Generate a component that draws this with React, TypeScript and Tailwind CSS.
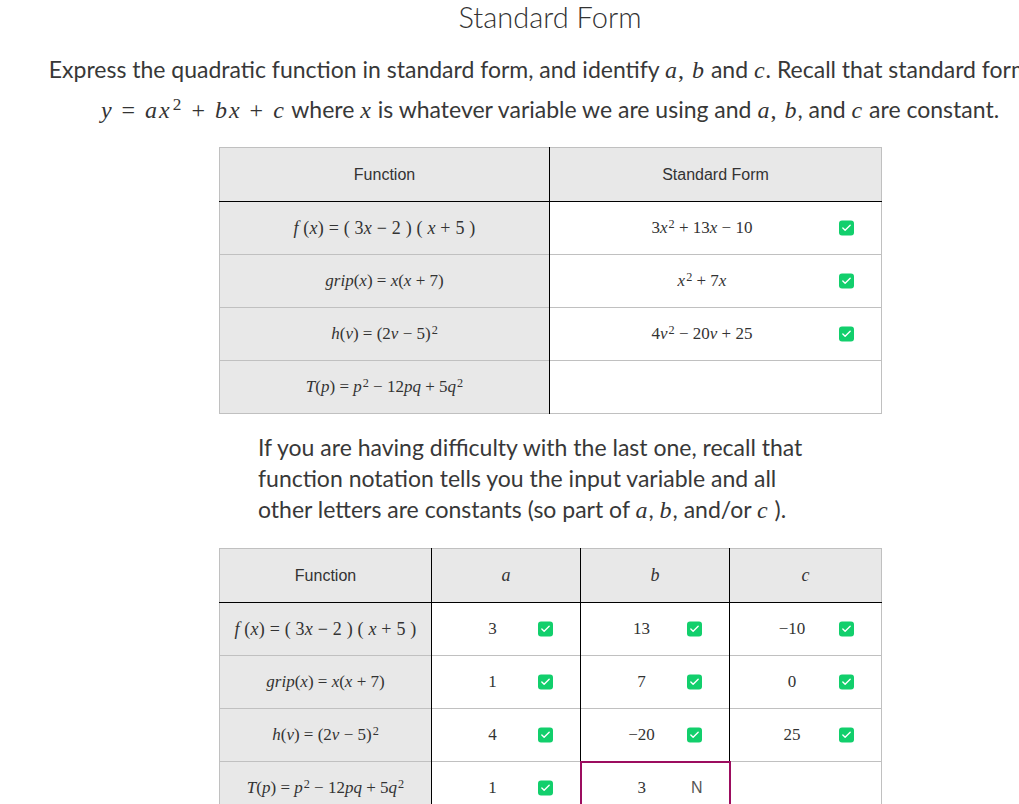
import React from 'react';
import { Check } from 'lucide-react';

const serif = "font-['Liberation_Serif',serif] font-normal";

const V: React.FC<{ children: React.ReactNode }> = ({ children }) => <i className="italic">{children}</i>;
const Sup: React.FC<{ children: React.ReactNode }> = ({ children }) => (
  <sup className="text-[0.72em] relative -top-[0.45em] ml-[1px]">{children}</sup>
);

const Math: React.FC<{ children: React.ReactNode; className?: string }> = ({ children, className = '' }) => (
  <span className={`${serif} text-[#333] ${className}`}>{children}</span>
);

const Tick = () => (
  <span className="inline-flex w-[15px] h-[15px] rounded-[3px] bg-[#12cf6c] items-center justify-center">
    <Check className="w-[11px] h-[11px] text-white" strokeWidth={3} />
  </span>
);

const fx = (
  <Math className="text-[18px] tracking-[0.2px]">
    <V>f</V> (<V>x</V>) = ( 3<V>x</V> − 2 ) ( <V>x</V> + 5 )
  </Math>
);
const grip = (
  <Math className="text-[17px]">
    <V>grip</V>(<V>x</V>) = <V>x</V>(<V>x</V> + 7)
  </Math>
);
const hv = (
  <Math className="text-[17px]">
    <V>h</V>(<V>v</V>) = (2<V>v</V> − 5)<Sup>2</Sup>
  </Math>
);
const tp = (
  <Math className="text-[17px]">
    <V>T</V>(<V>p</V>) = <V>p</V><Sup>2</Sup> − 12<V>pq</V> + 5<V>q</V><Sup>2</Sup>
  </Math>
);

const ValueCell: React.FC<{ value?: React.ReactNode; mark?: React.ReactNode; className?: string }> = ({
  value,
  mark,
  className = '',
}) => (
  <td className={`p-0 pr-[27px] ${className}`}>
    <div className="relative flex items-center justify-center h-full">
      <span>{value}</span>
      {mark && <span className="absolute right-0 top-1/2 -translate-y-1/2 flex">{mark}</span>}
    </div>
  </td>
);

const pm = 'text-[24px] tracking-[1px]';

export default function App() {
  return (
    <div className="w-full h-screen overflow-hidden bg-white">
      <div className="w-[1100px] text-[#383838] font-['Lato',sans-serif]">
        <h1 className="text-center text-[29px] leading-[34px] font-light text-[#333]">Standard Form</h1>

        <p className="text-center text-[23px] leading-[39px] mt-[16px] whitespace-nowrap">
          Express the quadratic function in standard form, and identify{' '}
          <Math className={pm}><V>a</V>, <V>b</V></Math> and <Math className={pm}><V>c</V></Math>. Recall that standard form is
          <br />
          <Math className={`${pm} tracking-[2px]`}>
            <V>y</V> = <V>ax</V><Sup>2</Sup> + <V>bx</V> + <V>c</V>
          </Math>{' '}
          where <Math className={pm}><V>x</V></Math> is whatever variable we are using and{' '}
          <Math className={pm}><V>a</V>, <V>b</V></Math>, and <Math className={pm}><V>c</V></Math> are constant.
        </p>

        <table className="mt-[17px] ml-[219px] w-[662px] border-collapse border border-[#c0c0c0] table-fixed">
          <colgroup>
            <col className="w-[330px]" />
            <col className="w-[332px]" />
          </colgroup>
          <thead>
            <tr className="h-[54px] bg-[#e8e8e8] border-b border-black font-['Liberation_Sans',sans-serif] text-[16px] text-[#333]">
              <th className="font-normal border-r border-black">Function</th>
              <th className="font-normal">Standard Form</th>
            </tr>
          </thead>
          <tbody>
            {[
              [fx, <Math className="text-[17px]">3<V>x</V><Sup>2</Sup> + 13<V>x</V> − 10</Math>, true],
              [grip, <Math className="text-[17px]"><V>x</V><Sup>2</Sup> + 7<V>x</V></Math>, true],
              [hv, <Math className="text-[17px]">4<V>v</V><Sup>2</Sup> − 20<V>v</V> + 25</Math>, true],
              [tp, null, false],
            ].map(([f, sf, ok], i) => (
              <tr key={i} className="h-[53px] border-b border-[#c0c0c0]">
                <td className="bg-[#e8e8e8] text-center border-r border-black">{f}</td>
                <ValueCell value={sf} mark={ok ? <Tick /> : null} />
              </tr>
            ))}
          </tbody>
        </table>

        <p className="ml-[258px] w-[560px] mt-[18px] text-[23px] leading-[31px]">
          If you are having difficulty with the last one, recall that function notation tells you the input variable and all
          other letters are constants (so part of{' '}
          <Math className={pm}><V>a</V></Math>, <Math className={pm}><V>b</V></Math>, and/or{' '}
          <Math className={pm}><V>c</V></Math> ).
        </p>

        <table className="mt-[22px] ml-[219px] w-[662px] border-collapse border border-[#c0c0c0] table-fixed">
          <colgroup>
            <col className="w-[212px]" />
            <col className="w-[149px]" />
            <col className="w-[149px]" />
            <col className="w-[152px]" />
          </colgroup>
          <thead>
            <tr className="h-[54px] bg-[#e8e8e8] border-b border-black text-[16px] text-[#333]">
              <th className="font-normal font-['Liberation_Sans',sans-serif] border-r border-black">Function</th>
              <th className="font-normal border-r border-black"><Math className="text-[18px]"><V>a</V></Math></th>
              <th className="font-normal border-r border-black"><Math className="text-[18px]"><V>b</V></Math></th>
              <th className="font-normal"><Math className="text-[18px]"><V>c</V></Math></th>
            </tr>
          </thead>
          <tbody className={`${serif} text-[17px] text-[#333]`}>
            {[
              [fx, '3', '13', '−10'],
              [grip, '1', '7', '0'],
              [hv, '4', '−20', '25'],
            ].map(([f, a, b, c], i) => (
              <tr key={i} className="h-[53px] border-b border-[#c0c0c0]">
                <td className="bg-[#e8e8e8] text-center border-r border-black">{f}</td>
                <ValueCell value={a} mark={<Tick />} className="border-r border-black" />
                <ValueCell value={b} mark={<Tick />} className="border-r border-black" />
                <ValueCell value={c} mark={<Tick />} />
              </tr>
            ))}
            <tr className="h-[53px]">
              <td className="bg-[#e8e8e8] text-center border-r border-black">{tp}</td>
              <ValueCell value="1" mark={<Tick />} className="border-r border-black" />
              <ValueCell
                value="3"
                mark={<span className="font-['Liberation_Sans',sans-serif] text-[#555] text-[16px]">N</span>}
                className="outline-2 -outline-offset-1 outline-[#9c0d5f]"
              />
              <ValueCell />
            </tr>
          </tbody>
        </table>
      </div>
    </div>
  );
}
